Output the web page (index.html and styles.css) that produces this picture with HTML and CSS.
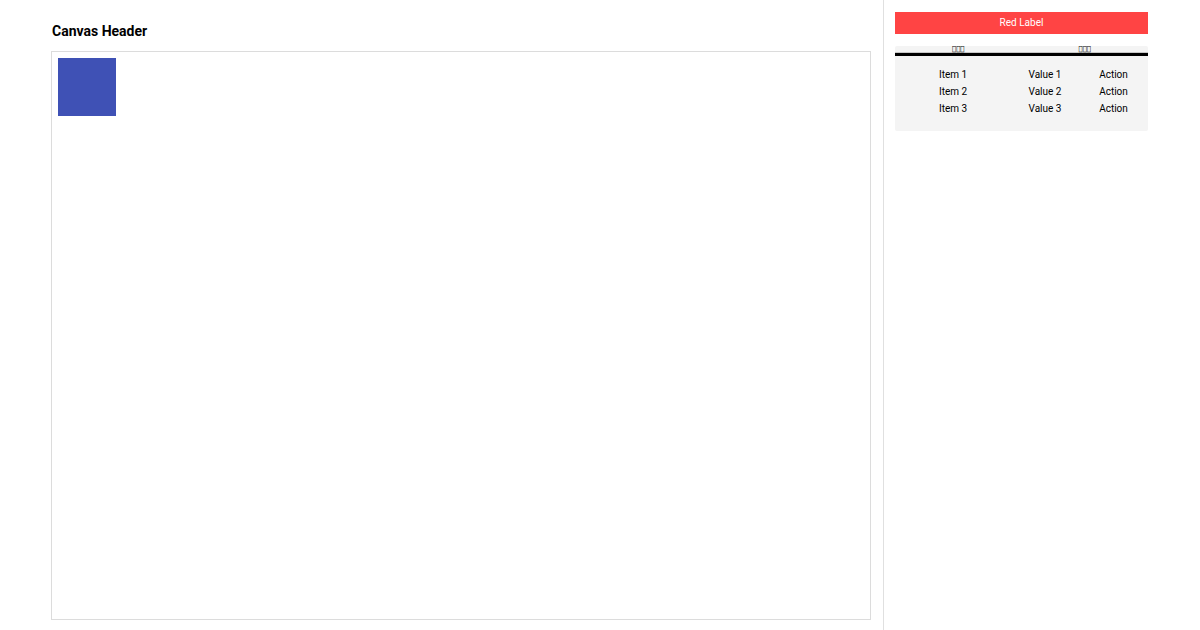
FILE: index.html
```html
<!DOCTYPE html>
<html>
<head>
<meta charset="utf-8">
<link rel="stylesheet" href="styles.css">
</head>
<body>
<div class="app">
  <main class="main">
    <h2 class="title">Canvas Header</h2>
    <div class="canvas">
      <div class="square"></div>
    </div>
  </main>
  <aside class="sidebar">
    <div class="red-label">Red Label</div>
    <div class="panel">
      <div class="tabs">
        <div class="tab">&#xE000;&#xE001;&#xE002;</div>
        <div class="tab">&#xE003;&#xE004;&#xE005;</div>
      </div>
      <div class="tab-indicator"></div>
      <table class="grid">
        <colgroup><col class="c1"><col class="c2"><col class="c3"></colgroup>
        <tr><td>Item 1</td><td>Value 1</td><td>Action</td></tr>
        <tr><td>Item 2</td><td>Value 2</td><td>Action</td></tr>
        <tr><td>Item 3</td><td>Value 3</td><td>Action</td></tr>
      </table>
    </div>
  </aside>
</div>
</body>
</html>
```
FILE: styles.css
```css
html, body {
  margin: 0;
  padding: 0;
  height: 100%;
  background: #fff;
  font-family: Roboto, "Liberation Sans", sans-serif;
  color: #000;
}
.app {
  display: flex;
  height: 630px;
}
.main {
  flex: 1;
  display: flex;
  flex-direction: column;
  padding: 23px 12px 10px 51px;
  gap: 12px;
}
.title {
  margin: 0;
  font-size: 14px;
  font-weight: 700;
  line-height: 16px;
  padding-left: 1px;
}
.canvas {
  flex: 1;
  border: 1px solid #dcdcdc;
  padding: 6px;
}
.square {
  width: 58px;
  height: 58px;
  background: #3f51b5;
}
.sidebar {
  box-sizing: border-box;
  width: 317px;
  border-left: 1px solid #e0e0e0;
  padding: 12px 52px 12px 11px;
}
.red-label {
  height: 22px;
  background: #ff4444;
  color: #fff;
  font-size: 10px;
  line-height: 22px;
  text-align: center;
}
.panel {
  margin-top: 12px;
  background: #f4f4f4;
  border-radius: 2px;
  padding-bottom: 14px;
}
.tabs {
  display: flex;
  height: 6px;
  border-bottom: 1px solid #c8c8c8;
}
.tab {
  flex: 1;
  text-align: center;
  font-size: 7px;
  line-height: 7px;
  font-family: "DejaVu Sans", sans-serif;
}
.tab-indicator {
  height: 3px;
  background: #000;
}
.grid {
  width: 100%;
  table-layout: fixed;
  border-collapse: collapse;
  margin-top: 10px;
  font-size: 10px;
}
.c1 { width: 116px; }
.c2 { width: 68px; }
.grid td {
  text-align: center;
  height: 17px;
  padding: 0;
}
```
